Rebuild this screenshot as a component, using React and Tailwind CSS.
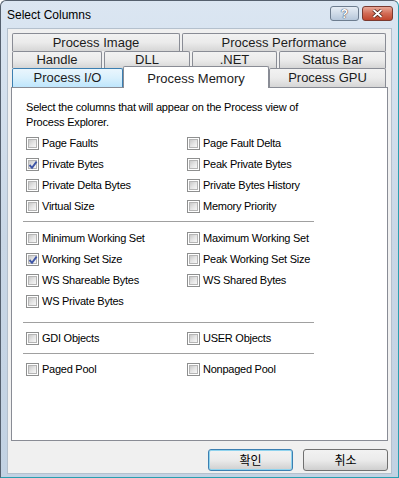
import React from 'react';

const font = { fontFamily: '"Liberation Sans", Arial, sans-serif' };

// Vista style check box
const CheckBox = ({ checked }) => (
    <span className="relative w-[13px] h-[13px] shrink-0 border border-[#8e8f8f] bg-white p-[1px]">
        <span className="block w-full h-full bg-gradient-to-br from-[#c9c9c9] via-[#e4e4e4] to-[#f7f7f7] border border-[#b5b5b5]" />
        {checked && (
            <svg className="absolute left-[1px] top-[1px]" width="10" height="10" viewBox="0 0 10 10">
                <path d="M1.5 5 L4 7.8 L8.6 1.6" fill="none" stroke="#3f56a6" strokeWidth="1.9" />
            </svg>
        )}
    </span>
);

const Item = ({ label, checked }) => (
    <div className="h-[21px] flex items-center gap-[2px]">
        <CheckBox checked={checked} />
        <span className="text-[11px] tracking-[-0.25px] text-black leading-none ml-[1px]">{label}</span>
    </div>
);

const Row = ({ left, right }) => (
    <div className="grid grid-cols-[161px_1fr]">
        {left ? <Item {...left} /> : <div />}
        {right ? <Item {...right} /> : <div />}
    </div>
);

const Separator = () => (
    <div className="w-[291px] -ml-[3px] border-t border-[#a0a0a0] border-b border-b-white" />
);

// One tab header
const Tab = ({ label, w, h, state }) => {
    const look =
        state === 'hover'
            ? 'bg-gradient-to-b from-[#eaf6fd] via-[#d9f0fc] to-[#bee6fd] border-[#3c7fb1]'
            : 'bg-gradient-to-b from-[#f2f2f2] via-[#ebebeb] to-[#d6d6d6] border-[#898c95]';
    return (
        <div
            className={`${w} ${h} shrink-0 flex items-center justify-center border-x border-t rounded-t-[2px] text-[13px] text-[#1c1c1c] ${look}`}
        >
            {label}
        </div>
    );
};

const Button = ({ label, primary }) => (
    <button
        className={`w-[85px] h-[22px] rounded-[3px] border text-[12px] text-black flex items-center justify-center bg-gradient-to-b from-[#f2f2f2] via-[#ebebeb] to-[#cfcfcf] ${
            primary ? 'border-[#3c7fb1] shadow-[inset_0_0_0_1px_#8fd3ee]' : 'border-[#707070]'
        }`}
        style={{ fontFamily: '"Noto Sans CJK KR", "Liberation Sans", sans-serif' }}
    >
        {label}
    </button>
);

export default function App() {
    return (
        <div className="w-[399px] h-[478px] bg-white" style={font}>
            <div className="w-full h-full flex flex-col rounded-t-[6px] border border-[#55606e] border-b-[#2a9fb0] border-r-[#2a9fb0] bg-gradient-to-b from-[#dbe6f2] via-[#c9d7e6] to-[#c2d2e3]">
                {/* title bar */}
                <div className="h-[27px] flex items-center pl-[6px] pr-[5px] shrink-0">
                    <span className="text-[12px] text-black flex-1">Select Columns</span>
                    <div className="flex gap-[3px] -mt-[2px]">
                        <div className="w-[29px] h-[15px] rounded-[3px] border border-[#6d7d8f] bg-gradient-to-b from-[#e6edf5] via-[#cfdbe8] to-[#b6c7da] flex items-center justify-center">
                            <span className="text-[12px] font-bold text-white leading-none [text-shadow:0_0_1px_#334,0_0_1px_#334]">?</span>
                        </div>
                        <div className="w-[31px] h-[15px] rounded-[3px] border border-[#7a3a30] bg-gradient-to-b from-[#e8a898] via-[#d26b55] to-[#c0452c] flex items-center justify-center">
                            <svg width="11" height="9" viewBox="0 0 11 9">
                                <path d="M1.5 1 L9.5 8 M9.5 1 L1.5 8" stroke="#4a2018" strokeWidth="3.4" />
                                <path d="M1.5 1 L9.5 8 M9.5 1 L1.5 8" stroke="#ffffff" strokeWidth="1.8" />
                            </svg>
                        </div>
                    </div>
                </div>

                {/* client area */}
                <div className="flex-1 mx-[6px] mb-[3px] bg-[#f0f0f0] border border-[#b4c0cd] pt-[4px] pl-[3px] pr-[3px] flex flex-col">
                    <div className="px-[1px]">
                        <div className="flex gap-[2px]">
                            <Tab label="Process Image" w="w-[168px]" h="h-[18px]" />
                            <Tab label="Process Performance" w="w-[204px]" h="h-[18px]" />
                        </div>
                        <div className="flex gap-[2px]">
                            <Tab label="Handle" w="w-[90px]" h="h-[17px]" />
                            <Tab label="DLL" w="w-[86px]" h="h-[17px]" />
                            <Tab label=".NET" w="w-[85px]" h="h-[17px]" />
                            <Tab label="Status Bar" w="w-[107px]" h="h-[17px]" />
                        </div>
                        <div className="flex items-end h-[19px]">
                            <Tab label="Process I/O" w="w-[111px]" h="h-[19px]" state="hover" />
                            <div className="relative z-10 w-[146px] h-[22px] -mb-px shrink-0 bg-white border-x border-t border-[#898c95] rounded-t-[2px] flex items-start justify-center pt-[2px] text-[13px] text-[#1c1c1c]">
                                Process Memory
                            </div>
                            <Tab label="Process GPU" w="w-[117px]" h="h-[19px]" />
                        </div>
                    </div>

                    {/* tab page */}
                    <div className="h-[354px] bg-white border border-[#898c95] pt-[12px] pl-[14px]">
                        <p className="text-[11px] tracking-[-0.2px] leading-[15px] text-black">
                            Select the columns that will appear on the Process view of
                            <br />
                            Process Explorer.
                        </p>
                        <div className="mt-[3px]">
                            <Row left={{ label: 'Page Faults' }} right={{ label: 'Page Fault Delta' }} />
                            <Row left={{ label: 'Private Bytes', checked: true }} right={{ label: 'Peak Private Bytes' }} />
                            <Row left={{ label: 'Private Delta Bytes' }} right={{ label: 'Private Bytes History' }} />
                            <Row left={{ label: 'Virtual Size' }} right={{ label: 'Memory Priority' }} />
                        </div>
                        <div className="mt-[4px] mb-[5px]">
                            <Separator />
                        </div>
                        <Row left={{ label: 'Minimum Working Set' }} right={{ label: 'Maximum Working Set' }} />
                        <Row left={{ label: 'Working Set Size', checked: true }} right={{ label: 'Peak Working Set Size' }} />
                        <Row left={{ label: 'WS Shareable Bytes' }} right={{ label: 'WS Shared Bytes' }} />
                        <Row left={{ label: 'WS Private Bytes' }} />
                        <div className="mt-[10px] mb-[4px]">
                            <Separator />
                        </div>
                        <Row left={{ label: 'GDI Objects' }} right={{ label: 'USER Objects' }} />
                        <div className="mt-[4px] mb-[4px]">
                            <Separator />
                        </div>
                        <Row left={{ label: 'Paged Pool' }} right={{ label: 'Nonpaged Pool' }} />
                    </div>

                    {/* buttons */}
                    <div className="flex justify-end gap-[10px] mt-[8px]">
                        <Button label="확인" primary />
                        <Button label="취소" />
                    </div>
                </div>
            </div>
        </div>
    );
}
